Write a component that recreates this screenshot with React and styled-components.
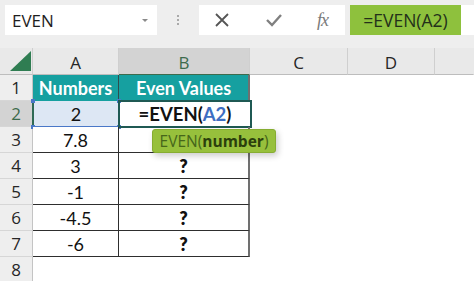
import styled, { createGlobalStyle } from 'styled-components';

const GlobalStyle = createGlobalStyle`
  * { box-sizing: border-box; }
  body {
    margin: 0;
    background: #ffffff;
    font-family: "Open Sans", "Liberation Sans", sans-serif;
  }
`;

const rows = [
  { n: 1, a: 'Numbers', b: 'Even Values', head: true },
  { n: 2, a: '2', b: 'formula' },
  { n: 3, a: '7.8', b: '' },
  { n: 4, a: '3', b: '?' },
  { n: 5, a: '-1', b: '?' },
  { n: 6, a: '-4.5', b: '?' },
  { n: 7, a: '-6', b: '?' },
];

const App = () => {
  return (
    <>
      <GlobalStyle />
      <Page>
        <TopBar>
          <NameBox>
            <span>EVEN</span>
            <Caret />
          </NameBox>
          <Grip>
            <i /><i /><i />
          </Grip>
          <FuncBox>
            <svg width="16" height="16" viewBox="0 0 16 16">
              <path d="M2 2 L14 14 M14 2 L2 14" stroke="#555" strokeWidth="1.8" fill="none" />
            </svg>
            <svg width="18" height="14" viewBox="0 0 18 14">
              <path d="M2 7 L7 12 L16 2" stroke="#808080" strokeWidth="2.4" fill="none" />
            </svg>
            <Fx>fx</Fx>
          </FuncBox>
          <FormulaBox>
            <Selected>=EVEN(A2)</Selected>
          </FormulaBox>
        </TopBar>

        <Sheet>
          <Corner>
            <svg width="21" height="20" viewBox="0 0 21 20">
              <polygon points="21,0 21,20 0,20" fill="#2f7d52" />
            </svg>
          </Corner>
          <ColHead>A</ColHead>
          <ColHead $active>B</ColHead>
          <ColHead>C</ColHead>
          <ColHead>D</ColHead>
          <ColHead $last />

          {rows.map((r) => (
            <Row key={r.n} r={r} />
          ))}
          <RowHead>8</RowHead>
          <Blank />
          <Blank />
          <Blank />
          <Blank />
          <Blank />

          <Tip>
            EVEN(<b>number</b>)
          </Tip>
        </Sheet>
      </Page>
    </>
  );
};

const Row = ({ r }) => {
  if (r.head) {
    return (
      <>
        <RowHead>{r.n}</RowHead>
        <HeadCell>{r.a}</HeadCell>
        <HeadCell $right>{r.b}</HeadCell>
        <Blank />
        <Blank />
        <Blank />
      </>
    );
  }
  return (
    <>
      <RowHead $active={r.n === 2}>{r.n}</RowHead>
      <NumCell $ref={r.n === 2}>
        {r.a}
        {r.n === 2 && (
          <>
            <Handle $pos="tl" />
            <Handle $pos="tr" />
            <Handle $pos="bl" />
            <Handle $pos="br" />
          </>
        )}
      </NumCell>
      {r.b === 'formula' ? (
        <ActiveCell>
          =EVEN(<Ref>A2</Ref>)
        </ActiveCell>
      ) : (
        <ValCell>{r.b}</ValCell>
      )}
      <Blank />
      <Blank />
      <Blank />
    </>
  );
};

const Page = styled.div`
  width: 474px;
  height: 281px;
  overflow: hidden;
  background: #ffffff;
`;

const TopBar = styled.div`
  display: flex;
  align-items: flex-start;
  height: 48px;
  padding: 5px 0 0 5px;
  background: #eeeeee;
`;

const NameBox = styled.div`
  width: 152px;
  height: 30px;
  background: #ffffff;
  display: flex;
  align-items: center;
  justify-content: space-between;
  padding: 0 9px 0 7px;
  font-size: 17px;
  color: #1e1e1e;
`;

const Caret = styled.span`
  width: 0;
  height: 0;
  border-left: 3.5px solid transparent;
  border-right: 3.5px solid transparent;
  border-top: 3.5px solid #8a8a8a;
`;

const Grip = styled.div`
  width: 42px;
  height: 30px;
  display: flex;
  flex-direction: column;
  align-items: center;
  justify-content: center;
  gap: 2px;

  i {
    width: 2px;
    height: 2px;
    background: #a9a9a9;
  }
`;

const FuncBox = styled.div`
  width: 146px;
  height: 30px;
  background: #ffffff;
  display: flex;
  align-items: center;
  justify-content: space-between;
  padding: 0 17px 0 15px;
`;

const Fx = styled.span`
  font-family: "Liberation Serif", serif;
  font-style: italic;
  font-size: 18px;
  color: #7a7a7a;
  letter-spacing: -1px;
`;

const FormulaBox = styled.div`
  flex: 1;
  height: 30px;
  margin-left: 5px;
  background: #ffffff;
  display: flex;
`;

const Selected = styled.div`
  width: 111px;
  height: 30px;
  background: #8ec13d;
  color: #23301a;
  font-size: 17.5px;
  display: flex;
  align-items: center;
  justify-content: center;
`;

const Sheet = styled.div`
  position: relative;
  display: grid;
  grid-template-columns: 33px 86px 131px 98px 87px 1fr;
  grid-template-rows: 27px repeat(8, 26px);
  font-family: "Lato", "Open Sans", sans-serif;
`;

const Corner = styled.div`
  background: #e9e9e9;
  border-right: 1px solid #cfcfcf;
  border-bottom: 1px solid #bdbdbd;
  display: flex;
  align-items: flex-end;
  justify-content: flex-end;
  padding: 0 1px 3px 0;
`;

const ColHead = styled.div`
  background: ${(p) => (p.$active ? '#d3d3d3' : '#e9e9e9')};
  color: ${(p) => (p.$active ? '#3d6b4c' : '#262626')};
  border-right: 1px solid ${(p) => (p.$last ? 'transparent' : '#cfcfcf')};
  border-bottom: 1px solid ${(p) => (p.$active ? '#3d6b4c' : '#bdbdbd')};
  font-family: "Open Sans", sans-serif;
  font-size: 17px;
  display: flex;
  align-items: center;
  justify-content: center;
  padding-top: 3px;
`;

const RowHead = styled.div`
  background: ${(p) => (p.$active ? '#d3d3d3' : '#eeeeee')};
  color: ${(p) => (p.$active ? '#3d6b4c' : '#262626')};
  border-right: 1px solid ${(p) => (p.$active ? '#2f6a55' : '#c4c4c4')};
  border-bottom: 1px solid #d6d6d6;
  font-family: "Open Sans", sans-serif;
  font-size: 17px;
  display: flex;
  align-items: center;
  justify-content: center;
`;

const Cell = styled.div`
  position: relative;
  display: flex;
  align-items: center;
  justify-content: center;
  font-size: 18px;
  color: #111111;
  border-bottom: 1px solid #2e2e2e;
`;

const HeadCell = styled(Cell)`
  background: #16a0a0;
  color: #ffffff;
  font-weight: 700;
  border-bottom: 1px solid #16a0a0;
  border-right: ${(p) => (p.$right ? '2px solid #707070' : '1px solid #2e4e4e')};
`;

const NumCell = styled(Cell)`
  border-right: 1px solid #2e2e2e;
  background: ${(p) => (p.$ref ? '#dde7f4' : '#ffffff')};
  ${(p) =>
    p.$ref &&
    `
    border-bottom: 1px solid #4a78c8;
    border-left: 1px solid #2f6a55;
  `}
`;

const Handle = styled.span`
  position: absolute;
  width: 4px;
  height: 4px;
  background: #4a78c8;
  ${(p) => (p.$pos.includes('t') ? 'top: -2px;' : 'bottom: -3px;')}
  ${(p) => (p.$pos.includes('l') ? 'left: -3px;' : 'right: -3px;')}
`;

const ValCell = styled(Cell)`
  font-weight: 800;
  border-right: 2px solid #707070;
`;

const ActiveCell = styled(Cell)`
  font-weight: 700;
  font-size: 18.5px;
  border: 2px solid #1f5953;
  margin: -1px -2px -1px -1px;
`;

const Ref = styled.span`
  color: #3e6ec2;
`;

const Blank = styled.div`
  background: #ffffff;
`;

const Tip = styled.div`
  position: absolute;
  left: 152px;
  top: 81px;
  width: 124px;
  height: 24px;
  background: #97c03c;
  border: 1px solid #86ad31;
  border-radius: 3px;
  box-shadow: 2px 3px 6px rgba(0, 0, 0, 0.2);
  color: #46661a;
  font-family: "Open Sans", sans-serif;
  font-size: 15.5px;
  display: flex;
  align-items: center;
  justify-content: center;

  b {
    color: #2b3f0c;
  }
`;

export default App;
